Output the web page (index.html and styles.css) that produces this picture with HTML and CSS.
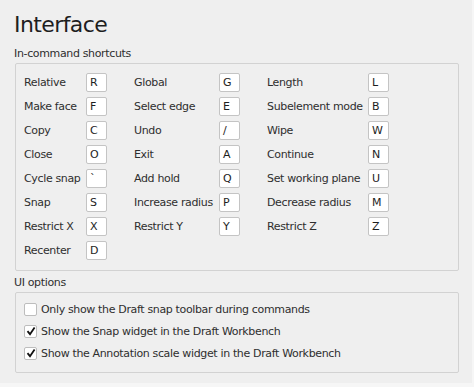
FILE: index.html
```html
<!DOCTYPE html>
<html>
<head>
<meta charset="utf-8">
<link rel="stylesheet" href="styles.css">
</head>
<body>
<div class="window">
  <h1 class="title">Interface</h1>
  <div class="section-label">In-command shortcuts</div>
  <div class="group shortcuts">
    <span class="lbl">Relative</span><span class="key">R</span>
    <span class="lbl">Global</span><span class="key">G</span>
    <span class="lbl">Length</span><span class="key">L</span>

    <span class="lbl">Make face</span><span class="key">F</span>
    <span class="lbl">Select edge</span><span class="key">E</span>
    <span class="lbl">Subelement mode</span><span class="key">B</span>

    <span class="lbl">Copy</span><span class="key">C</span>
    <span class="lbl">Undo</span><span class="key">/</span>
    <span class="lbl">Wipe</span><span class="key">W</span>

    <span class="lbl">Close</span><span class="key">O</span>
    <span class="lbl">Exit</span><span class="key">A</span>
    <span class="lbl">Continue</span><span class="key">N</span>

    <span class="lbl">Cycle snap</span><span class="key">`</span>
    <span class="lbl">Add hold</span><span class="key">Q</span>
    <span class="lbl">Set working plane</span><span class="key">U</span>

    <span class="lbl">Snap</span><span class="key">S</span>
    <span class="lbl">Increase radius</span><span class="key">P</span>
    <span class="lbl">Decrease radius</span><span class="key">M</span>

    <span class="lbl">Restrict X</span><span class="key">X</span>
    <span class="lbl">Restrict Y</span><span class="key">Y</span>
    <span class="lbl">Restrict Z</span><span class="key">Z</span>

    <span class="lbl">Recenter</span><span class="key">D</span>
  </div>
  <div class="section-label second">UI options</div>
  <div class="group options">
    <div class="opt"><span class="cb"></span><span>Only show the Draft snap toolbar during commands</span></div>
    <div class="opt"><span class="cb"><svg width="10" height="10" viewBox="0 0 10 10"><path d="M1.5 5.2 L4 8.2 L8.6 1.6" fill="none" stroke="#111" stroke-width="1.8"/></svg></span><span>Show the Snap widget in the Draft Workbench</span></div>
    <div class="opt"><span class="cb"><svg width="10" height="10" viewBox="0 0 10 10"><path d="M1.5 5.2 L4 8.2 L8.6 1.6" fill="none" stroke="#111" stroke-width="1.8"/></svg></span><span>Show the Annotation scale widget in the Draft Workbench</span></div>
  </div>
</div>
</body>
</html>
```
FILE: styles.css
```css
html, body {
  margin: 0;
  padding: 0;
  background: #f6f6f6;
}
body {
  font-family: "DejaVu Sans", sans-serif;
  font-size: 11px;
  letter-spacing: -0.35px;
  color: #2e2e2e;
}
.window {
  width: 472px;
  height: 383px;
  background: #efefef;
  box-sizing: border-box;
  padding: 12px 13px 0 15px;
}
.title {
  margin: 0 0 0 -1px;
  font-size: 22px;
  font-weight: normal;
  letter-spacing: -0.6px;
  line-height: 26px;
  color: #1e1e1e;
}
.section-label {
  margin: 9px 0 2px -1px;
  line-height: 14px;
}
.section-label.second {
  margin-top: 5px;
}
.group {
  border: 1px solid #d2d2d2;
  border-radius: 2px;
  box-sizing: border-box;
}
.shortcuts {
  display: grid;
  grid-template-columns: 62px 48px 85px 48px 101px 21px;
  grid-auto-rows: 19px;
  row-gap: 5px;
  padding: 9px 0 10px 8px;
  height: 208px;
}
.lbl {
  display: flex;
  align-items: center;
  white-space: nowrap;
}
.key {
  width: 21px;
  height: 19px;
  box-sizing: border-box;
  background: #ffffff;
  border: 1px solid #c4c4c4;
  border-radius: 2px;
  padding-left: 3px;
  display: flex;
  align-items: center;
  color: #1e1e1e;
}
.options {
  padding: 5px 0 8px 8px;
  height: 81px;
}
.opt {
  height: 22px;
  display: flex;
  align-items: center;
  gap: 4px;
  white-space: nowrap;
}
.cb {
  width: 13px;
  height: 13px;
  box-sizing: border-box;
  background: #ffffff;
  border: 1px solid #bdbdbd;
  border-radius: 2px;
  display: flex;
  align-items: center;
  justify-content: center;
}
.cb svg {
  display: block;
}
```
